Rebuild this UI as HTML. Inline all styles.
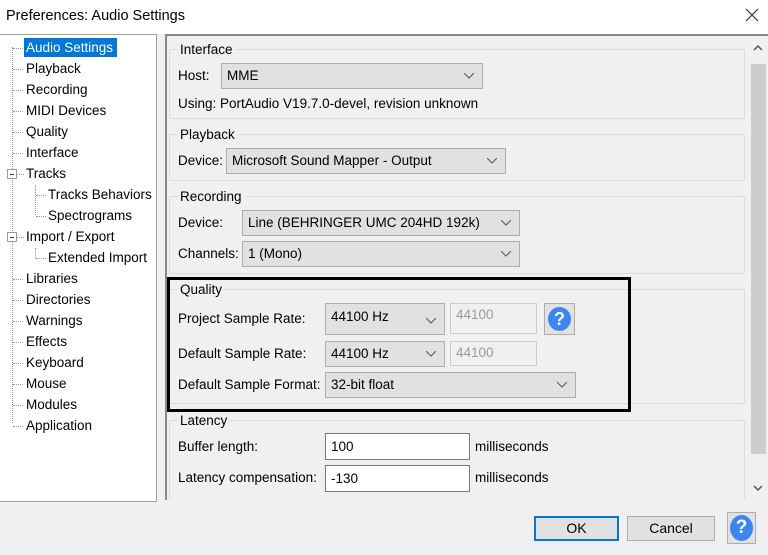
<!DOCTYPE html>
<html><head><meta charset="utf-8"><style>
*{margin:0;padding:0;box-sizing:border-box}
body{width:768px;height:555px;background:#f0f0f0;font-family:"Liberation Sans",sans-serif;font-size:13px;color:#000;position:relative;overflow:hidden}
.a{position:absolute;white-space:nowrap}
.title{left:0;top:0;width:768px;height:34px;background:#fff}
.tree{left:0;top:34px;width:157px;height:468px;background:#fff;border:1px solid #a0a0a0;border-left:none}
.ti{position:absolute;left:26px;height:19px;line-height:19px;font-size:13.5px}
.dh{position:absolute;height:0;border-top:1px dotted #999;width:10px}
.dv{position:absolute;width:0;border-left:1px dotted #999}
.bx{position:absolute;width:10px;height:10px;border:1px solid #999;background:#fff}
.bx:after{content:"";position:absolute;left:2px;top:4px;width:4px;height:1px;background:#333}
.panel{left:165px;top:34px;width:603px;height:466px;border-left:2px solid #888;border-top:2px solid #888}
.grp{position:absolute;border:1px solid #dcdcdc;border-radius:2px}
.gl{position:absolute;background:#f0f0f0;padding:0 2px;font-size:13.5px;line-height:14px}
.sel{position:absolute;background:#e1e1e1;border:1px solid #adadad;height:26px;line-height:24px;padding-left:5px;font-size:13.5px}
.sel svg{position:absolute;right:8px;top:9px}
.tb{position:absolute;background:#fff;border:1px solid #7a7a7a;height:27px;line-height:25px;padding-left:5px;font-size:13.5px}
.dis{background:#f0f0f0;border-color:#ccc;color:#999;line-height:22px}
.lab{position:absolute;font-size:13.5px;line-height:16px}
.btn{position:absolute;background:#e1e1e1;border:1px solid #adadad;height:25px;line-height:23px;text-align:center;font-size:14px}
.q{position:absolute;border-radius:50%;background:#3b86f0;color:#fff;font-weight:bold;text-align:center}
</style></head><body>
<div class="a title"></div>
<div class="a" style="left:6px;top:8px;font-size:14.5px">Preferences: Audio Settings</div>
<svg class="a" style="left:745px;top:8px" width="14" height="14"><path d="M1 1L13 13M13 1L1 13" stroke="#333" stroke-width="1.2"/></svg>

<div class="a tree">
<div class="dv" style="left:12px;top:12px;height:376px"></div>
<div class="dv" style="left:35px;top:150px;height:30px"></div>
<div class="dv" style="left:35px;top:213px;height:10px"></div>
<div style="position:absolute;left:24px;top:3px;width:93px;height:19px;background:#0078d7"></div>
<div class="ti" style="top:3px;color:#fff">Audio Settings</div>
<div class="dh" style="left:13px;top:13px"></div>
<div class="ti" style="top:24px">Playback</div><div class="dh" style="left:13px;top:34px"></div>
<div class="ti" style="top:45px">Recording</div><div class="dh" style="left:13px;top:55px"></div>
<div class="ti" style="top:66px">MIDI Devices</div><div class="dh" style="left:13px;top:76px"></div>
<div class="ti" style="top:87px">Quality</div><div class="dh" style="left:13px;top:97px"></div>
<div class="ti" style="top:108px">Interface</div><div class="dh" style="left:13px;top:118px"></div>
<div class="ti" style="top:129px">Tracks</div><div class="dh" style="left:17px;top:139px;width:7px"></div><div class="bx" style="left:7px;top:134px"></div>
<div class="ti" style="top:150px;left:48px">Tracks Behaviors</div><div class="dh" style="left:36px;top:160px"></div>
<div class="ti" style="top:171px;left:48px">Spectrograms</div><div class="dh" style="left:36px;top:181px"></div>
<div class="ti" style="top:192px">Import / Export</div><div class="dh" style="left:17px;top:202px;width:7px"></div><div class="bx" style="left:7px;top:197px"></div>
<div class="ti" style="top:213px;left:48px">Extended Import</div><div class="dh" style="left:36px;top:223px"></div>
<div class="ti" style="top:234px">Libraries</div><div class="dh" style="left:13px;top:244px"></div>
<div class="ti" style="top:255px">Directories</div><div class="dh" style="left:13px;top:265px"></div>
<div class="ti" style="top:276px">Warnings</div><div class="dh" style="left:13px;top:286px"></div>
<div class="ti" style="top:297px">Effects</div><div class="dh" style="left:13px;top:307px"></div>
<div class="ti" style="top:318px">Keyboard</div><div class="dh" style="left:13px;top:328px"></div>
<div class="ti" style="top:339px">Mouse</div><div class="dh" style="left:13px;top:349px"></div>
<div class="ti" style="top:360px">Modules</div><div class="dh" style="left:13px;top:370px"></div>
<div class="ti" style="top:381px">Application</div><div class="dh" style="left:13px;top:391px"></div>
</div>

<div class="a panel"></div>
<!-- scrollbar -->
<div class="a" style="left:750px;top:36px;width:17px;height:464px;background:#f0f0f0"></div>
<div class="a" style="left:751px;top:64px;width:15px;height:390px;background:#cdcdcd"></div>
<svg class="a" style="left:753px;top:44px" width="10" height="7"><path d="M1 6L5 2L9 6" stroke="#555" stroke-width="1.5" fill="none"/></svg>
<svg class="a" style="left:753px;top:485px" width="10" height="7"><path d="M1 1L5 5L9 1" stroke="#555" stroke-width="1.5" fill="none"/></svg>

<!-- Interface -->
<div class="grp" style="left:169px;top:49px;width:576px;height:70px"></div>
<div class="gl" style="left:178px;top:43px">Interface</div>
<div class="lab" style="left:178px;top:68px">Host:</div>
<div class="sel" style="left:221px;top:63px;width:262px">MME<svg width="10" height="6"><path d="M0 0L5 5L10 0" stroke="#555" fill="none"/></svg></div>
<div class="lab" style="left:178px;top:96px">Using: PortAudio V19.7.0-devel, revision unknown</div>

<!-- Playback -->
<div class="grp" style="left:169px;top:134px;width:576px;height:47px"></div>
<div class="gl" style="left:178px;top:128px">Playback</div>
<div class="lab" style="left:178px;top:153px">Device:</div>
<div class="sel" style="left:226px;top:148px;width:280px">Microsoft Sound Mapper - Output<svg width="10" height="6"><path d="M0 0L5 5L10 0" stroke="#555" fill="none"/></svg></div>

<!-- Recording -->
<div class="grp" style="left:169px;top:196px;width:576px;height:78px"></div>
<div class="gl" style="left:178px;top:190px">Recording</div>
<div class="lab" style="left:178px;top:215px">Device:</div>
<div class="sel" style="left:242px;top:210px;width:278px">Line (BEHRINGER UMC 204HD 192k)<svg width="10" height="6"><path d="M0 0L5 5L10 0" stroke="#555" fill="none"/></svg></div>
<div class="lab" style="left:178px;top:246px">Channels:</div>
<div class="sel" style="left:242px;top:241px;width:278px">1 (Mono)<svg width="10" height="6"><path d="M0 0L5 5L10 0" stroke="#555" fill="none"/></svg></div>

<!-- Quality -->
<div class="grp" style="left:169px;top:289px;width:576px;height:115px"></div>
<div class="gl" style="left:178px;top:283px">Quality</div>
<div class="lab" style="left:178px;top:311px">Project Sample Rate:</div>
<div class="sel" style="left:325px;top:303px;width:120px;height:32px;line-height:26px">44100 Hz<svg width="10" height="6" style="top:14px"><path d="M0 0L5 5L10 0" stroke="#555" fill="none"/></svg></div>
<div class="tb dis" style="left:450px;top:303px;width:87px;height:31px">44100</div>
<div class="a" style="left:544px;top:303px;width:31px;height:32px;background:#e1e1e1;border:1px solid #adadad"></div>
<div class="q" style="left:548px;top:307px;width:23px;height:24px;line-height:24px;font-size:18px">?</div>
<div class="lab" style="left:178px;top:346px">Default Sample Rate:</div>
<div class="sel" style="left:325px;top:341px;width:120px">44100 Hz<svg width="10" height="6"><path d="M0 0L5 5L10 0" stroke="#555" fill="none"/></svg></div>
<div class="tb dis" style="left:450px;top:341px;width:87px;height:25px">44100</div>
<div class="lab" style="left:178px;top:377px">Default Sample Format:</div>
<div class="sel" style="left:325px;top:372px;width:251px">32-bit float<svg width="10" height="6"><path d="M0 0L5 5L10 0" stroke="#555" fill="none"/></svg></div>
<div class="a" style="left:167px;top:277px;width:464px;height:135px;border:3px solid #000"></div>

<!-- Latency -->
<div class="grp" style="left:169px;top:420px;width:576px;height:80px;border-bottom:none"></div>
<div class="gl" style="left:178px;top:414px">Latency</div>
<div class="lab" style="left:178px;top:439px">Buffer length:</div>
<div class="tb" style="left:325px;top:433px;width:145px">100</div>
<div class="lab" style="left:475px;top:439px">milliseconds</div>
<div class="lab" style="left:178px;top:470px">Latency compensation:</div>
<div class="tb" style="left:325px;top:465px;width:145px">-130</div>
<div class="lab" style="left:475px;top:470px">milliseconds</div>

<!-- buttons -->
<div class="btn" style="left:534px;top:516px;width:85px;border:2px solid #0078d7;line-height:21px">OK</div>
<div class="btn" style="left:627px;top:516px;width:88px">Cancel</div>
<div class="a" style="left:727px;top:512px;width:29px;height:32px;background:#e1e1e1;border:1px solid #adadad"></div>
<div class="q" style="left:730px;top:515px;width:23px;height:26px;line-height:26px;font-size:19px">?</div>
</body></html>
